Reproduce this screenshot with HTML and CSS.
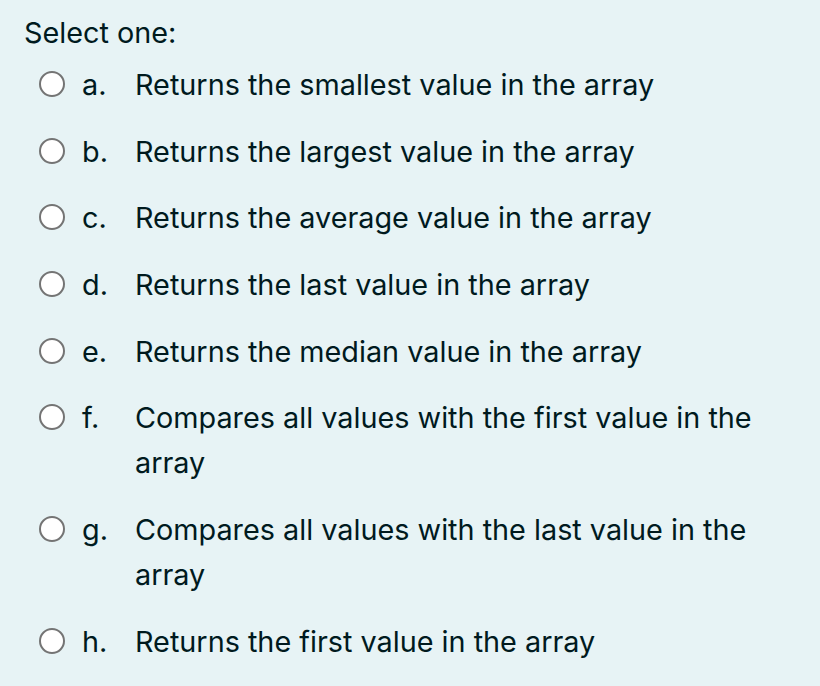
FILE: index.html
```html
<!DOCTYPE html>
<html lang="en">
<head>
<meta charset="UTF-8">
<meta name="viewport" content="width=device-width, initial-scale=1.0">
<title>Question</title>
<link rel="stylesheet" href="styles.css">
</head>
<body>
    <div class="formulation">
        <div class="prompt">Select one:</div>

        <div class="answer">
            <div class="r0">
                <input type="radio" name="q1" id="q1-a">
                <label for="q1-a"><span class="answernumber">a.</span><span class="answertext">Returns the smallest value in the array</span></label>
            </div>
            <div class="r1">
                <input type="radio" name="q1" id="q1-b">
                <label for="q1-b"><span class="answernumber">b.</span><span class="answertext">Returns the largest value in the array</span></label>
            </div>
            <div class="r0">
                <input type="radio" name="q1" id="q1-c">
                <label for="q1-c"><span class="answernumber">c.</span><span class="answertext">Returns the average value in the array</span></label>
            </div>
            <div class="r1">
                <input type="radio" name="q1" id="q1-d">
                <label for="q1-d"><span class="answernumber">d.</span><span class="answertext">Returns the last value in the array</span></label>
            </div>
            <div class="r0">
                <input type="radio" name="q1" id="q1-e">
                <label for="q1-e"><span class="answernumber">e.</span><span class="answertext">Returns the median value in the array</span></label>
            </div>
            <div class="r1">
                <input type="radio" name="q1" id="q1-f">
                <label for="q1-f"><span class="answernumber">f.</span><span class="answertext">Compares all values with the first value in the array</span></label>
            </div>
            <div class="r0">
                <input type="radio" name="q1" id="q1-g">
                <label for="q1-g"><span class="answernumber">g.</span><span class="answertext">Compares all values with the last value in the array</span></label>
            </div>
            <div class="r1">
                <input type="radio" name="q1" id="q1-h">
                <label for="q1-h"><span class="answernumber">h.</span><span class="answertext">Returns the first value in the array</span></label>
            </div>
        </div>
    </div>
</body>
</html>
```

FILE: styles.css
```css
body {
    font-family: Inter, 'Liberation Sans', Arial, sans-serif;
    margin: 0;
    padding: 0;
    background-color: #e7f3f5;
    color: #001a1e;
}
.formulation {
    padding: 10px 0 0 24px;
    font-size: 28.8px;
    line-height: 45px;
}
.prompt {
    margin-bottom: 7px;
}
.answer {
    display: flex;
    flex-direction: column;
    gap: 21.7px;
    padding-left: 15px;
}
.answer > div {
    display: flex;
    align-items: flex-start;
}
input[type="radio"] {
    appearance: none;
    -webkit-appearance: none;
    flex: 0 0 auto;
    width: 26px;
    height: 26px;
    margin: 9px 0 0 0;
    border: 2px solid #747474;
    border-radius: 50%;
    background-color: #fff;
    box-sizing: border-box;
}
label {
    display: flex;
    max-width: 720px;
}
.answernumber {
    flex: 0 0 auto;
    width: 53px;
    padding-left: 17px;
    box-sizing: content-box;
}
.answertext {
    flex: 1;
}
```
